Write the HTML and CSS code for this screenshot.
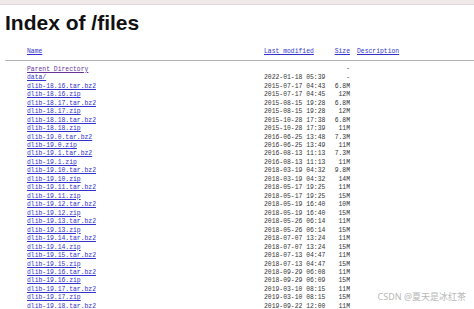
FILE: index.html
```html
<!DOCTYPE html>
<html lang="en">
<head>
    <meta charset="UTF-8">
    <meta name="viewport" content="width=device-width, initial-scale=1.0">
    <title>Index of /files</title>
    <link rel="stylesheet" href="styles.css">
</head>
<body>
    <div class="topbar"></div>
    <h1>Index of /files</h1>

    <div class="listing">
        <div class="row head">
            <span></span>
            <a href="#">Name</a>
            <a href="#">Last modified</a>
            <a href="#" class="size">Size</a>
            <a href="#">Description</a>
        </div>
        <hr>
        <div class="row"><span></span><a href="#" class="visited">Parent Directory</a><span></span><span class="size up">-</span><span></span></div>
        <div class="row"><span></span><a href="#">data/</a><span>2022-01-18 05:39</span><span class="size">-</span><span></span></div>
        <div class="row"><span></span><a href="#">dlib-18.16.tar.bz2</a><span>2015-07-17 04:43</span><span class="size">6.8M</span><span></span></div>
        <div class="row"><span></span><a href="#">dlib-18.16.zip</a><span>2015-07-17 04:45</span><span class="size">12M</span><span></span></div>
        <div class="row"><span></span><a href="#">dlib-18.17.tar.bz2</a><span>2015-08-15 19:28</span><span class="size">6.8M</span><span></span></div>
        <div class="row"><span></span><a href="#">dlib-18.17.zip</a><span>2015-08-15 19:28</span><span class="size">12M</span><span></span></div>
        <div class="row"><span></span><a href="#">dlib-18.18.tar.bz2</a><span>2015-10-28 17:38</span><span class="size">6.8M</span><span></span></div>
        <div class="row"><span></span><a href="#">dlib-18.18.zip</a><span>2015-10-28 17:39</span><span class="size">11M</span><span></span></div>
        <div class="row"><span></span><a href="#">dlib-19.0.tar.bz2</a><span>2016-06-25 13:48</span><span class="size">7.3M</span><span></span></div>
        <div class="row"><span></span><a href="#">dlib-19.0.zip</a><span>2016-06-25 13:49</span><span class="size">11M</span><span></span></div>
        <div class="row"><span></span><a href="#">dlib-19.1.tar.bz2</a><span>2016-08-13 11:13</span><span class="size">7.3M</span><span></span></div>
        <div class="row"><span></span><a href="#">dlib-19.1.zip</a><span>2016-08-13 11:13</span><span class="size">11M</span><span></span></div>
        <div class="row"><span></span><a href="#">dlib-19.10.tar.bz2</a><span>2018-03-19 04:32</span><span class="size">9.8M</span><span></span></div>
        <div class="row"><span></span><a href="#">dlib-19.10.zip</a><span>2018-03-19 04:32</span><span class="size">14M</span><span></span></div>
        <div class="row"><span></span><a href="#">dlib-19.11.tar.bz2</a><span>2018-05-17 19:25</span><span class="size">11M</span><span></span></div>
        <div class="row"><span></span><a href="#">dlib-19.11.zip</a><span>2018-05-17 19:25</span><span class="size">15M</span><span></span></div>
        <div class="row"><span></span><a href="#">dlib-19.12.tar.bz2</a><span>2018-05-19 16:40</span><span class="size">10M</span><span></span></div>
        <div class="row"><span></span><a href="#">dlib-19.12.zip</a><span>2018-05-19 16:40</span><span class="size">15M</span><span></span></div>
        <div class="row"><span></span><a href="#">dlib-19.13.tar.bz2</a><span>2018-05-26 06:14</span><span class="size">11M</span><span></span></div>
        <div class="row"><span></span><a href="#">dlib-19.13.zip</a><span>2018-05-26 06:14</span><span class="size">15M</span><span></span></div>
        <div class="row"><span></span><a href="#">dlib-19.14.tar.bz2</a><span>2018-07-07 13:24</span><span class="size">11M</span><span></span></div>
        <div class="row"><span></span><a href="#">dlib-19.14.zip</a><span>2018-07-07 13:24</span><span class="size">15M</span><span></span></div>
        <div class="row"><span></span><a href="#">dlib-19.15.tar.bz2</a><span>2018-07-13 04:47</span><span class="size">11M</span><span></span></div>
        <div class="row"><span></span><a href="#">dlib-19.15.zip</a><span>2018-07-13 04:47</span><span class="size">15M</span><span></span></div>
        <div class="row"><span></span><a href="#">dlib-19.16.tar.bz2</a><span>2018-09-29 06:08</span><span class="size">11M</span><span></span></div>
        <div class="row"><span></span><a href="#">dlib-19.16.zip</a><span>2018-09-29 06:09</span><span class="size">15M</span><span></span></div>
        <div class="row"><span></span><a href="#">dlib-19.17.tar.bz2</a><span>2019-03-10 08:15</span><span class="size">11M</span><span></span></div>
        <div class="row"><span></span><a href="#">dlib-19.17.zip</a><span>2019-03-10 08:15</span><span class="size">15M</span><span></span></div>
        <div class="row"><span></span><a href="#">dlib-19.18.tar.bz2</a><span>2019-09-22 12:00</span><span class="size">11M</span><span></span></div>
    </div>

    <div class="watermark">CSDN @夏天是冰红茶</div>
</body>
</html>
```

FILE: styles.css
```css
body {
    margin: 0;
    background-color: white;
    color: #333;
    overflow: hidden;
    position: relative;
    height: 309px;
}

.topbar {
    height: 4px;
    background-color: #f1e9e9;
    border-bottom: 1px solid #e2d8d8;
}

h1 {
    margin: 0;
    padding: 3px 0 0 5px;
    font-family: "Liberation Sans", Arial, sans-serif;
    font-size: 21px;
    font-weight: 700;
    line-height: 30px;
    color: #111;
}

.listing {
    margin-top: 10px;
    padding-left: 5px;
    font-family: "Liberation Mono", monospace;
    font-size: 6.4px;
}

.row {
    display: grid;
    grid-template-columns: 22px 237px 66px 21px auto;
    line-height: 8.47px;
    height: 8.47px;
    white-space: nowrap;
}

.row a {
    color: #3333cc;
    text-decoration: underline;
}

.row a.visited {
    color: #663399;
}

.row .size {
    text-align: right;
    padding-right: 1px;
}

.row.head a:last-child {
    padding-left: 6px;
}

.row .up {
    position: relative;
    top: -1px;
}

hr {
    border: 0;
    border-top: 1px solid #b4b4b4;
    margin: 3.5px 0 4.8px;
}

.watermark {
    position: absolute;
    right: 8px;
    bottom: 6px;
    font-family: "Noto Sans", "Noto Sans CJK SC", sans-serif;
    font-size: 9px;
    color: #b8b8b8;
}
```
